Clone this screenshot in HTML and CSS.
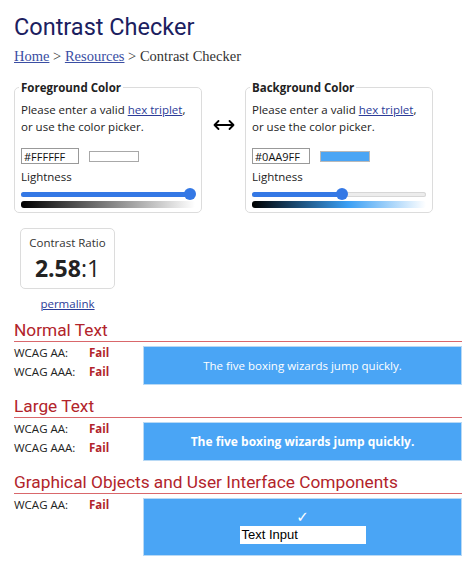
FILE: index.html
```html
<!DOCTYPE html>
<html lang="en">
<head>
<meta charset="utf-8">
<title>Contrast Checker</title>
<link rel="stylesheet" href="styles.css">
</head>
<body>
<main class="page">
  <h1 class="title">Contrast Checker</h1>
  <nav class="crumbs"><a href="#">Home</a> &gt; <a href="#">Resources</a> &gt; Contrast Checker</nav>

  <div class="pickers">
    <fieldset class="picker">
      <legend>Foreground Color</legend>
      <p class="hint">Please enter a valid <a href="#">hex triplet</a>,<br>or use the color picker.</p>
      <div class="inputs">
        <input class="hex" type="text" value="#FFFFFF">
        <span class="swatch swatch-fg"></span>
      </div>
      <div class="label">Lightness</div>
      <div class="slider">
        <div class="track"><div class="fill" style="width:97%"></div></div>
        <span class="thumb" style="left:97%"></span>
      </div>
      <div class="gradient grad-fg"></div>
    </fieldset>

    <div class="swap">
      <svg width="22" height="12" viewBox="0 0 22 12" aria-hidden="true">
        <path d="M1.5 6H20.5M5.5 2L1.5 6L5.5 10M16.5 2L20.5 6L16.5 10" fill="none" stroke="#000" stroke-width="1.8" stroke-linecap="round" stroke-linejoin="round"/>
      </svg>
    </div>

    <fieldset class="picker">
      <legend>Background Color</legend>
      <p class="hint">Please enter a valid <a href="#">hex triplet</a>,<br>or use the color picker.</p>
      <div class="inputs">
        <input class="hex" type="text" value="#0AA9FF">
        <span class="swatch swatch-bg"></span>
      </div>
      <div class="label">Lightness</div>
      <div class="slider">
        <div class="track"><div class="fill" style="width:52%"></div></div>
        <span class="thumb" style="left:52%"></span>
      </div>
      <div class="gradient grad-bg"></div>
    </fieldset>
  </div>

  <div class="ratio-wrap">
    <div class="ratio">
      <div class="ratio-label">Contrast Ratio</div>
      <div class="ratio-value"><b>2.58</b>:1</div>
    </div>
    <a class="permalink" href="#">permalink</a>
  </div>

  <section class="result">
    <h2 class="result-title">Normal Text</h2>
    <div class="result-body">
      <dl class="checks">
        <dt>WCAG AA:</dt><dd>Fail</dd>
        <dt>WCAG AAA:</dt><dd>Fail</dd>
      </dl>
      <div class="sample sample-text">The five boxing wizards jump quickly.</div>
    </div>
  </section>

  <section class="result">
    <h2 class="result-title">Large Text</h2>
    <div class="result-body">
      <dl class="checks">
        <dt>WCAG AA:</dt><dd>Fail</dd>
        <dt>WCAG AAA:</dt><dd>Fail</dd>
      </dl>
      <div class="sample sample-text sample-large">The five boxing wizards jump quickly.</div>
    </div>
  </section>

  <section class="result">
    <h2 class="result-title">Graphical Objects and User Interface Components</h2>
    <div class="result-body">
      <dl class="checks">
        <dt>WCAG AA:</dt><dd>Fail</dd>
      </dl>
      <div class="sample sample-ui">
        <span class="check">&#10003;</span>
        <span class="fake-input">Text Input</span>
      </div>
    </div>
  </section>
</main>
</body>
</html>
```

FILE: styles.css
```css
* { box-sizing: border-box; }

html, body {
  margin: 0;
  padding: 0;
  background: #fff;
}

body {
  font-family: "Open Sans", "Liberation Sans", sans-serif;
  font-size: 11.5px;
  color: #222;
}

a { color: #2c3c98; }

.page {
  padding: 0 12px 0 14px;
}

.title {
  font-family: Roboto, "Liberation Sans", sans-serif;
  font-weight: 400;
  font-size: 23.5px;
  line-height: 30px;
  color: #1b2060;
  margin: 12px 0 0;
}

.crumbs {
  font-family: "Liberation Serif", "DejaVu Serif", serif;
  font-size: 14.5px;
  line-height: 18px;
  color: #333;
  margin-top: 5px;
}

.crumbs a { color: #3a4ea3; }

.pickers {
  display: flex;
  align-items: flex-start;
  margin-top: 14px;
}

.picker {
  width: 188px;
  margin: 0;
  border: 1px solid #dcdcdc;
  border-radius: 5px;
  padding: 5px 6px 4px;
}

.picker legend {
  font-weight: 700;
  font-size: 11.5px;
  line-height: 17px;
  padding: 0 2px;
  margin-left: -2px;
  color: #222;
}

.hint {
  margin: 0;
  line-height: 17px;
}

.inputs {
  display: flex;
  align-items: center;
  margin-top: 13px;
}

.hex {
  width: 58px;
  height: 16px;
  border: 1px solid #999;
  border-radius: 0;
  padding: 0 2px;
  font-family: "Open Sans", "Liberation Sans", sans-serif;
  font-size: 11px;
  color: #111;
  background: #fff;
  margin: 0;
}

.swatch {
  width: 50px;
  height: 11px;
  margin-left: 10px;
  border: 1px solid #a8a8a8;
}

.swatch-fg { background: #fff; }
.swatch-bg { background: #4aa5f5; border-color: #b9b9b9; }

.label {
  margin-top: 4px;
  line-height: 17px;
}

.slider {
  position: relative;
  height: 12px;
  margin-top: 3px;
  display: flex;
  align-items: center;
}

.track {
  width: 100%;
  height: 5px;
  border-radius: 3px;
  background: #ececec;
  box-shadow: inset 0 0 0 1px #d6d6d6;
  overflow: hidden;
}

.fill {
  height: 100%;
  background: #3478e5;
}

.thumb {
  position: absolute;
  top: 0;
  width: 12px;
  height: 12px;
  margin-left: -6px;
  border-radius: 50%;
  background: #3478e5;
}

.gradient {
  height: 7px;
  margin-top: 1px;
  border-radius: 3px;
}

.grad-fg { background: linear-gradient(to right, #000, #fff); }
.grad-bg { background: linear-gradient(to right, #000, #3a9ff4 55%, #fff); }

.swap {
  width: 43px;
  display: flex;
  justify-content: center;
  margin-top: 40px;
}

.ratio-wrap {
  display: inline-flex;
  flex-direction: column;
  align-items: center;
  margin: 15px 0 0 6px;
}

.ratio {
  width: 95px;
  height: 61px;
  border: 1px solid #dcdcdc;
  border-radius: 5px;
  text-align: center;
  padding-top: 5px;
}

.ratio-label {
  line-height: 17px;
  color: #333;
}

.ratio-value {
  font-size: 23px;
  line-height: 28px;
  margin-top: 3px;
  color: #222;
}

.ratio-value b { font-weight: 700; }

.permalink {
  margin-top: 6px;
  line-height: 17px;
}

.result { margin-top: 8px; }
.result + .result { margin-top: 11px; }

.result-title {
  font-family: Roboto, "Liberation Sans", sans-serif;
  font-weight: 400;
  font-size: 17.3px;
  line-height: 21px;
  color: #b2242b;
  margin: 0;
  border-bottom: 1px solid #d9676b;
}

.result-body {
  display: grid;
  grid-template-columns: 129px 1fr;
  align-items: start;
}

.checks {
  display: grid;
  grid-template-columns: 75px auto;
  margin: 1px 0 0;
  line-height: 19px;
  color: #222;
}

.checks dt { margin: 0; }
.checks dd {
  margin: 0;
  font-weight: 700;
  color: #b2242b;
}

.sample {
  margin-top: 4px;
  background: #4aa5f5;
  color: #fff;
  border: 1px solid #b8d9f5;
}

.sample-text {
  height: 39px;
  display: flex;
  align-items: center;
  justify-content: center;
}

.sample-large {
  font-size: 12px;
  font-weight: 700;
}

.sample-ui {
  height: 58px;
  display: flex;
  flex-direction: column;
  align-items: center;
  padding-top: 9px;
}

.check {
  font-family: "DejaVu Sans", sans-serif;
  font-size: 15px;
  line-height: 18px;
  color: #fff;
}

.fake-input {
  width: 126px;
  height: 18px;
  background: #fff;
  color: #000;
  font-family: "Liberation Sans", Arial, sans-serif;
  font-size: 13px;
  line-height: 18px;
  padding-left: 2px;
}
```
